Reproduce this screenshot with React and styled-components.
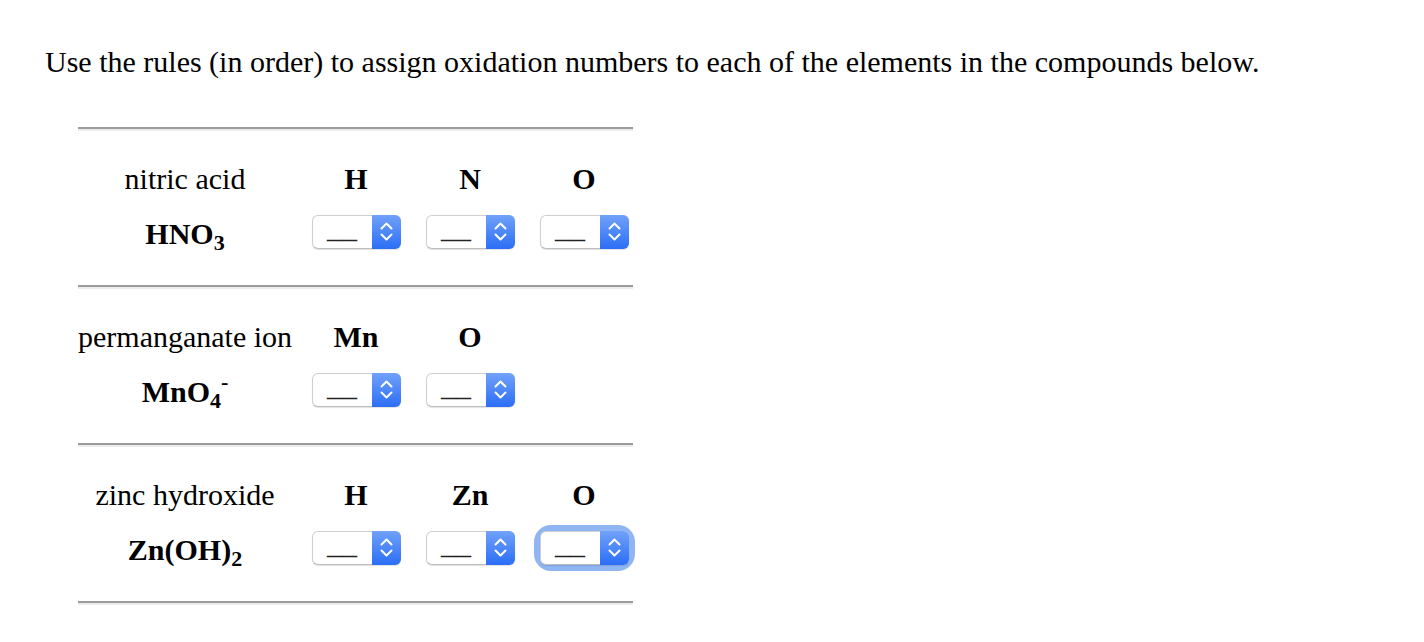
import React from "react";
import styled, { createGlobalStyle } from "styled-components";

const GlobalStyle = createGlobalStyle`
  html, body {
    margin: 0;
    padding: 0;
    background: #fff;
  }
  body {
    font-family: "Liberation Serif", "Times New Roman", serif;
    color: #000;
  }
`;

const Page = styled.main`
  padding: 45px 0 40px 45px;
`;

const Title = styled.p`
  margin: 0 0 48px;
  font-size: 30px;
  line-height: 34px;
`;

const Sheet = styled.div`
  margin-left: 33px;
  width: 555px;
`;

const Rule = styled.div`
  height: 2px;
  background: #9b9b9b;
  border-bottom: 2px solid #ececec;
`;

const Block = styled.section`
  display: grid;
  grid-template-columns: 221px repeat(3, 114px);
  grid-auto-rows: 34px;
  row-gap: 19px;
  padding: 31px 0 36px;
  font-size: 30px;
  line-height: 34px;
`;

const Name = styled.div`
  padding-right: 7px;
  text-align: center;
  white-space: nowrap;
`;

const Formula = styled(Name)`
  font-weight: bold;
  padding-top: 2px;

  sub,
  sup {
    font-size: 22px;
    line-height: 0;
  }
  sub {
    vertical-align: -6px;
  }
  sup {
    vertical-align: 13px;
  }
`;

const Element = styled.div`
  text-align: center;
  font-weight: bold;
`;

const Cell = styled.div`
  display: flex;
  justify-content: center;
  align-items: flex-start;
`;

const Ring = styled.div`
  border-radius: 11px;
  box-shadow: ${(p) => (p.$focus ? "0 0 0 6px #90b5f3" : "none")};
`;

const Select = styled.div`
  display: flex;
  align-items: flex-start;
  width: 89px;
  height: 34px;
  box-sizing: border-box;
  border: 1px solid #cfcfcf;
  border-bottom-color: #bdbdbd;
  border-radius: 6px;
  background: #fff;
  box-shadow: 0 1px 1px rgba(0, 0, 0, 0.12);
  cursor: default;
`;

const Value = styled.span`
  flex: 1;
  height: 28px;
  text-align: center;
  font-family: "Liberation Serif", serif;
  font-weight: normal;
  font-size: 30px;
  line-height: 24px;
  color: #222;
`;

const Stepper = styled.span`
  display: flex;
  align-self: stretch;
  width: 29px;
  margin: -1px -1px -1px 0;
  border-radius: 0 6px 6px 0;
  background: linear-gradient(#71a2f9, #2b6ef6);

  svg {
    display: block;
  }
`;

const Chevrons = () => (
  <svg width="29" height="34" viewBox="0 0 29 34" fill="none">
    <path d="M9.5 13.5 L14.5 8.5 L19.5 13.5" stroke="#fff" strokeWidth="2" strokeLinecap="round" strokeLinejoin="round" />
    <path d="M9.5 19.5 L14.5 24.5 L19.5 19.5" stroke="#fff" strokeWidth="2" strokeLinecap="round" strokeLinejoin="round" />
  </svg>
);

const Dropdown = ({ focus }) => (
  <Ring $focus={focus}>
    <Select role="combobox" aria-label="oxidation number">
      <Value>__</Value>
      <Stepper>
        <Chevrons />
      </Stepper>
    </Select>
  </Ring>
);

const compounds = [
  {
    name: "nitric acid",
    formula: (
      <>
        HNO<sub>3</sub>
      </>
    ),
    elements: ["H", "N", "O"],
  },
  {
    name: "permanganate ion",
    formula: (
      <>
        MnO<sub>4</sub>
        <sup>-</sup>
      </>
    ),
    elements: ["Mn", "O"],
  },
  {
    name: "zinc hydroxide",
    formula: (
      <>
        Zn(OH)<sub>2</sub>
      </>
    ),
    elements: ["H", "Zn", "O"],
    focused: 2,
  },
];

const Compound = ({ name, formula, elements, focused }) => (
  <Block>
    <Name>{name}</Name>
    {elements.map((el) => (
      <Element key={el}>{el}</Element>
    ))}
    {elements.length < 3 && <div />}
    <Formula>{formula}</Formula>
    {elements.map((el, i) => (
      <Cell key={el}>
        <Dropdown focus={focused === i} />
      </Cell>
    ))}
  </Block>
);

const App = () => (
  <>
    <GlobalStyle />
    <Page>
      <Title>
        Use the rules (in order) to assign oxidation numbers to each of the elements in the compounds below.
      </Title>
      <Sheet>
        {compounds.map((c) => (
          <React.Fragment key={c.name}>
            <Rule />
            <Compound {...c} />
          </React.Fragment>
        ))}
        <Rule />
      </Sheet>
    </Page>
  </>
);

export default App;
